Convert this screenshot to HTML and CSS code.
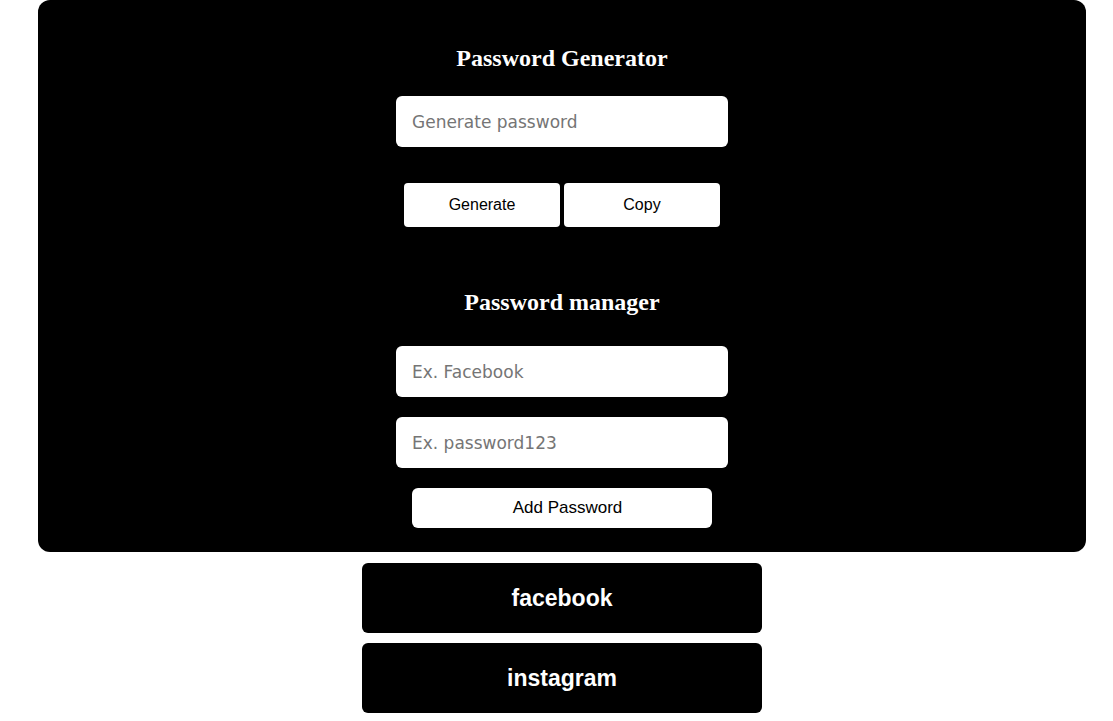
FILE: index.html
```html
<!DOCTYPE html>
<html lang="en">
<head>
    <meta charset="UTF-8">
    <meta name="viewport" content="width=device-width, initial-scale=1.0">
    <title>Password Manager</title>
<script>
    function generate() {
        let chars = 'abcdefghijklmnopqrstuvwxyzABCDEFGHIJKLMNOPQRSTUVWXYZ0123456789!@#$%';
        let pass = '';
        for (let i = 0; i < 12; i++) {
            pass += chars[Math.floor(Math.random() * chars.length)];
        }
        document.getElementById('generated').value = pass;
    }
    function copy() {
        let field = document.getElementById('generated');
        field.select();
        navigator.clipboard && navigator.clipboard.writeText(field.value);
    }
    function addPassword() {
        let site = document.getElementById('site').value;
        let pass = document.getElementById('pass').value;
        if (!site || !pass) return;
        let li = document.createElement('li');
        li.className = 'entry';
        li.textContent = site.toLowerCase();
        document.getElementById('saved').appendChild(li);
        document.getElementById('site').value = '';
        document.getElementById('pass').value = '';
    }
</script>

    <link rel="stylesheet" href="styles.css">
</head>
<body>
    <div class="panel">
        <h2 class="title">Password Generator</h2>
        <input type="text" class="field" id="generated" placeholder="Generate password">
        <div class="actions">
            <button type="button" class="btn" onclick="generate()">Generate</button>
            <button type="button" class="btn" onclick="copy()">Copy</button>
        </div>

        <h2 class="title manager">Password manager</h2>
        <input type="text" class="field" id="site" placeholder="Ex. Facebook">
        <input type="text" class="field" id="pass" placeholder="Ex. password123">
        <button type="button" class="btn add" onclick="addPassword()">Add Password</button>
    </div>

    <ul class="saved" id="saved">
        <li class="entry">facebook</li>
        <li class="entry">instagram</li>
    </ul>
</body>
</html>
```

FILE: styles.css
```css
body { margin: 0 0 0 38px; width: 1048px; background: #fff; font-family: "Liberation Sans", Arial, sans-serif; }

.panel { background: #000; border-radius: 12px; padding: 44px 0 24px; display: flex; flex-direction: column; align-items: center; }
.title { margin: 0; color: #fff; font-family: "Liberation Serif", "Times New Roman", serif; font-size: 24px; font-weight: bold; line-height: 28px; }
.manager { margin-top: 61px; }

.field { box-sizing: border-box; width: 332px; height: 51px; margin-top: 24px; padding: 0 16px; border: none; border-radius: 6px; background: #fff; font-family: "DejaVu Sans", Verdana, sans-serif; font-size: 17px; color: #222; outline: none; }
.field::placeholder { color: #757575; }
.manager + .field { margin-top: 30px; }
.field + .field { margin-top: 20px; }

.actions { display: flex; gap: 4px; margin-top: 36px; }
.btn { width: 156px; height: 44px; border: none; border-radius: 4px; background: #fff; color: #000; font-family: "Liberation Sans", Arial, sans-serif; font-size: 16px; cursor: pointer; }
.add { width: 300px; height: 40px; margin-top: 20px; padding-left: 17px; border-radius: 6px; font-size: 17px; }

.saved { list-style: none; margin: 11px 0 0; padding: 0; display: flex; flex-direction: column; align-items: center; gap: 10px; }
.entry { width: 400px; height: 70px; display: flex; align-items: center; justify-content: center; background: #000; border-radius: 6px; color: #fff; font-size: 23px; font-weight: bold; }
```
